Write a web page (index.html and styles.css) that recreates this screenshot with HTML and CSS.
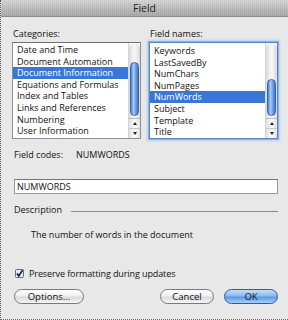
FILE: index.html
```html
<!DOCTYPE html>
<html>
  <head>
    <title>Field</title>
    <link rel="stylesheet" href="styles.css">
  </head>
  <body>
    <div class="window">
      <div class="titlebar">Field</div>

      <div class="content">
        <div class="lists">
          <div class="col">
            <div class="label">Categories:</div>
            <div class="listbox">
              <ul class="items">
                <li>Date and Time</li>
                <li>Document Automation</li>
                <li class="selected">Document Information</li>
                <li>Equations and Formulas</li>
                <li>Index and Tables</li>
                <li>Links and References</li>
                <li>Numbering</li>
                <li>User Information</li>
              </ul>
              <div class="scroll">
                <div class="track">
                  <div class="thumb thumb-left"></div>
                </div>
                <div class="arrows">
                  <span class="arrow up"></span>
                  <span class="arrow down"></span>
                </div>
              </div>
            </div>
          </div>

          <div class="col">
            <div class="label">Field names:</div>
            <div class="listbox focused">
              <ul class="items items-right">
                <li>Keywords</li>
                <li>LastSavedBy</li>
                <li>NumChars</li>
                <li>NumPages</li>
                <li class="selected">NumWords</li>
                <li>Subject</li>
                <li>Template</li>
                <li>Title</li>
              </ul>
              <div class="scroll">
                <div class="track">
                  <div class="thumb thumb-right"></div>
                </div>
                <div class="arrows">
                  <span class="arrow up"></span>
                  <span class="arrow down"></span>
                </div>
              </div>
            </div>
          </div>
        </div>

        <div class="codes">
          <span>Field codes:</span>
          <span class="code-value">NUMWORDS</span>
        </div>

        <div class="code-input">NUMWORDS</div>

        <div class="desc-head">
          <span>Description</span>
          <span class="rule"></span>
        </div>

        <div class="desc-text">The number of words in the document</div>

        <div class="check-row">
          <svg class="checkbox" width="9" height="9" viewBox="0 0 9 9">
            <rect x="0.5" y="0.5" width="8" height="8" rx="1" fill="#dfe9f7" stroke="#5a6f93"/>
            <path d="M2 4.5 L3.8 7 L7.6 1.2" fill="none" stroke="#111" stroke-width="1.5"/>
          </svg>
          <span>Preserve formatting during updates</span>
        </div>

        <div class="buttons">
          <button class="btn btn-options">Options...</button>
          <div class="right-buttons">
            <button class="btn btn-small">Cancel</button>
            <button class="btn btn-small btn-default">OK</button>
          </div>
        </div>
      </div>
    </div>
  </body>
</html>
```

FILE: styles.css
```css
* {
  box-sizing: border-box;
  margin: 0;
  padding: 0;
}

body {
  font-family: "Open Sans", "DejaVu Sans", sans-serif;
  font-size: 9px;
  color: #111;
  background: #e8e8e8;
}

.window {
  width: 288px;
  height: 320px;
  background: #e8e8e8;
  border-left: 1px dotted #555;
  border-bottom: 1px dotted #666;
  overflow: hidden;
}

/* Barra de título */
.titlebar {
  height: 17px;
  line-height: 16px;
  text-align: center;
  font-size: 10.5px;
  color: #222;
  background:
    repeating-linear-gradient(90deg, rgba(255,255,255,0.06) 0 1px, rgba(0,0,0,0.04) 1px 2px),
    linear-gradient(#d6d6d6, #b9b9b9 60%, #a9a9a9);
  border-bottom: 1px solid #8c8c8c;
}

.content {
  padding: 11px 10px 0 11px;
}

/* Listas */
.lists {
  display: flex;
  gap: 8px;
}

.col {
  width: 129px;
}

.label {
  height: 12px;
  line-height: 12px;
  margin-bottom: 2px;
  padding-left: 1px;
}

.listbox {
  display: flex;
  height: 97px;
  background: #fff;
  border: 1px solid #8e8e8e;
  border-top-color: #6f6f6f;
}

.listbox.focused {
  border-color: #5a86c8;
  box-shadow: 0 0 0 1px #8db2e6, 0 0 2px 2px #b9d0ef;
}

.items {
  flex: 1;
  list-style: none;
  padding-top: 1px;
}

.items-right {
  padding-top: 2px;
}

.items li {
  height: 11.6px;
  line-height: 11.6px;
  padding-left: 4px;
  white-space: nowrap;
}

.items li.selected {
  background: #3a76d6;
  color: #fff;
}

/* Barra de desplazamiento */
.scroll {
  width: 12px;
  display: flex;
  flex-direction: column;
  border-left: 1px solid #d4d4d4;
}

.track {
  flex: 1;
  display: flex;
  flex-direction: column;
  align-items: center;
  border-radius: 6px 6px 0 0;
  background:
    linear-gradient(90deg, #d9d9d9, #f4f4f4 40%, #f4f4f4 60%, #d9d9d9);
}

.thumb {
  width: 9px;
  border-radius: 5px;
  border: 1px solid #3a64a8;
  background: linear-gradient(90deg, #4a7fd0, #a9cbf4 35%, #7aa9ea 60%, #3f74cc);
}

.thumb-left {
  margin-top: 19px;
  height: 54px;
}

.thumb-right {
  margin-top: 36px;
  height: 37px;
}

.arrows {
  height: 20px;
  display: flex;
  flex-direction: column;
  background: linear-gradient(90deg, #e2e2e2, #fafafa 50%, #e2e2e2);
  border-top: 1px solid #bdbdbd;
}

.arrow {
  flex: 1;
  display: flex;
  align-items: center;
  justify-content: center;
}

.arrow + .arrow {
  border-top: 1px solid #c8c8c8;
}

.arrow::before {
  content: "";
  border-left: 2.5px solid transparent;
  border-right: 2.5px solid transparent;
}

.arrow.up::before {
  border-bottom: 3px solid #222;
}

.arrow.down::before {
  border-top: 3px solid #222;
}

/* Códigos de campo */
.codes {
  display: flex;
  height: 12px;
  line-height: 12px;
  margin-top: 10px;
  padding-left: 2px;
}

.code-value {
  margin-left: 13px;
}

.code-input {
  height: 15px;
  line-height: 13px;
  margin: 18px 0 0 2px;
  padding-left: 2px;
  background: #fff;
  border: 1px solid #9a9a9a;
  border-top-color: #777;
}

/* Descripción */
.desc-head {
  display: flex;
  align-items: center;
  height: 12px;
  line-height: 12px;
  margin-top: 10px;
  padding-left: 2px;
  gap: 9px;
}

.rule {
  flex: 1;
  height: 1px;
  margin-top: 3px;
  background: #8a8a8a;
}

.desc-text {
  height: 12px;
  line-height: 12px;
  margin-top: 13px;
  padding-left: 19px;
}

.check-row {
  display: flex;
  align-items: center;
  gap: 5px;
  height: 12px;
  margin-top: 26px;
  padding-left: 3px;
  letter-spacing: -0.1px;
}

/* Botones */
.buttons {
  display: flex;
  justify-content: space-between;
  margin-top: 10px;
  padding-left: 2px;
}

.right-buttons {
  display: flex;
  gap: 10px;
}

.btn {
  height: 15px;
  font-family: inherit;
  font-size: 9.5px;
  color: #111;
  border: 1px solid #7a7a7a;
  border-radius: 8px;
  background: linear-gradient(#ffffff, #f0f0f0 45%, #dadada 55%, #f6f6f6);
}

.btn-options {
  width: 70px;
}

.btn-small {
  width: 54px;
}

.btn-default {
  border-color: #2c5aa6;
  background: linear-gradient(#c9defa, #8db8f0 45%, #5c97e6 55%, #a8d0fa);
}
```
